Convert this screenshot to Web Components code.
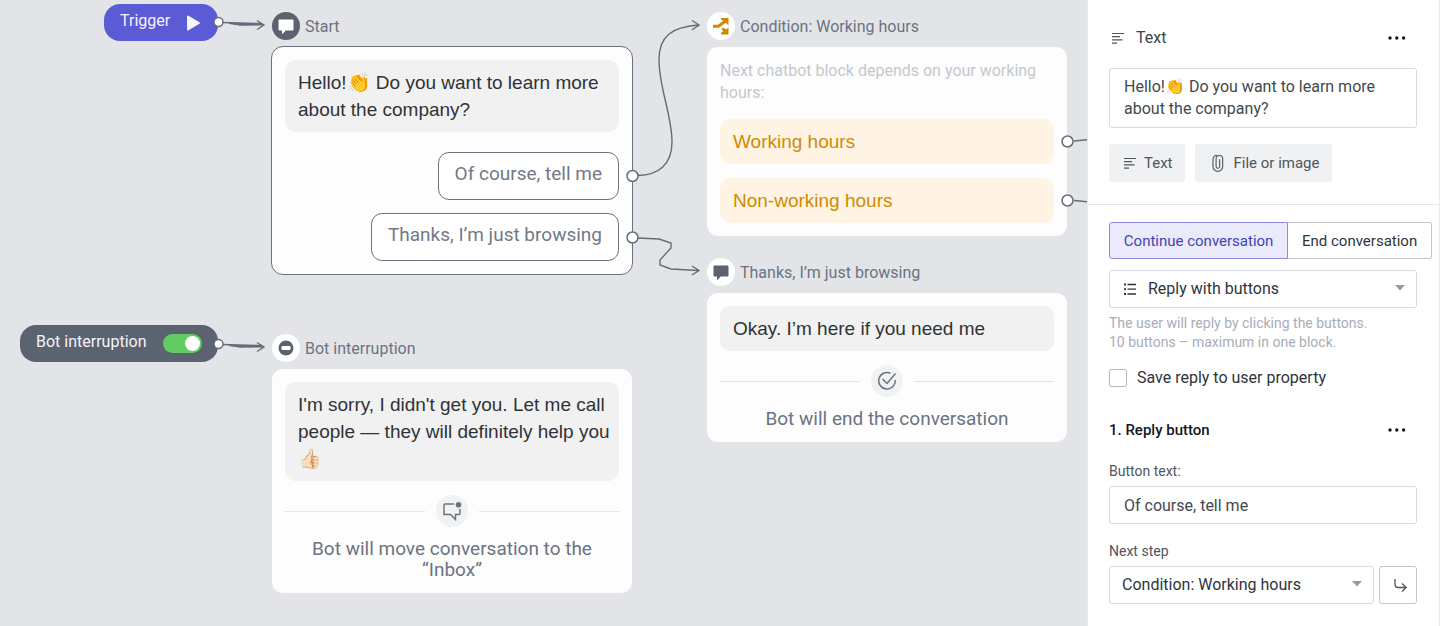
<!DOCTYPE html>
<html lang="en">
<head>
<meta charset="utf-8">
<title>Chatbot builder</title>
<style>
  body { margin: 0; font-family: Roboto, "Liberation Sans", sans-serif; font-size: 16px; color: #2f343c; }
</style>
</head>
<body>
<bot-builder></bot-builder>

<script>
const define = (name, html, setup) => {
  const template = document.createElement('template');
  template.innerHTML = html;
  customElements.define(name, class extends HTMLElement {
    constructor() {
      super();
      this.attachShadow({ mode: 'open' }).append(template.content.cloneNode(true));
    }
    connectedCallback() { if (setup) setup(this, this.shadowRoot); }
  });
};

const ICONS = {
  chat: [18, '<path fill="currentColor" d="M2 3h14v10H8.500L5.500 16.500V13H2z" stroke="currentColor" stroke-linejoin="round"/>'],
  branch: [18, '<path fill="none" stroke="currentColor" stroke-width="3" d="M1 9.300H6.500L13.500 4"/><path fill="currentColor" d="M9 1H16.500V8.500L14.500 6.500L11 3.500L9 2.800zM9 17.500H16.500V10.500L14 12.500L12 10.800L9.500 11.500L11 14.500L9 15.800z"/>'],
  minus: [18, '<circle cx="9" cy="9" r="7.500" fill="currentColor"/><rect x="4.500" y="7" width="9" height="4" rx="1.200" fill="#fff"/>'],
  play: [18, '<path fill="currentColor" d="M3 2.500v13a1 1 0 0 0 1.500.8l11-6.500a1 1 0 0 0 0-1.600l-11-6.500A1 1 0 0 0 3 2.500z"/>'],
  inbox: [20, '<path d="M12 3H3a1 1 0 0 0-1 1v9.500h6.500L13.500 18.500V13.500H17a1 1 0 0 0 1-1V8" fill="none" stroke="currentColor" stroke-width="1.500"/><circle cx="16.500" cy="3.800" r="2.800" fill="currentColor"/>'],
  done: [20, '<path d="M13.500 2.200A8.300 8.300 0 1 0 18.300 9" fill="none" stroke="currentColor" stroke-width="1.500"/><path d="M5.500 8l4.500 4.500L18.500 2.500" fill="none" stroke="currentColor" stroke-width="1.500"/>'],
  lines: [14, '<path d="M1 2.500h12M1 5.700h8M1 8.900h10.500M1 12.100h5" stroke="currentColor" stroke-width="1.200"/>'],
  list: [14, '<path d="M4.500 2.500H13M4.500 7.200H13M4.500 12H13" stroke="currentColor" stroke-width="1.300"/><path d="M1 2.500h2M1 7.200h2M1 12h2" stroke="currentColor" stroke-width="1.800"/>'],
  clip: [18, '<path d="M4 6v6.500a4.700 4.700 0 0 0 9.700 0V4.800a3.300 3.300 0 0 0-6.600 0V12.500a1.800 1.800 0 0 0 3.600 0V5.500M4 6C4 3.500 5 1.800 7.500 1.300" fill="none" stroke="currentColor" stroke-width="1.100" stroke-linecap="round"/>'],
  dots: [20, '<g fill="currentColor"><circle cx="3" cy="10" r="1.700"/><circle cx="9.800" cy="10" r="1.700"/><circle cx="16.600" cy="10" r="1.700"/></g>'],
  caret: [10, '<path d="M0 2h10L5 7.500z" fill="currentColor"/>'],
  jump: [18, '<path d="M4 3v5.500a3 3 0 0 0 3 3h8M11 7.500l4.200 4L11 15.500" fill="none" stroke="currentColor" stroke-width="1.300"/>']
};

define('ui-icon', `
  <style>:host { display: block; flex: none; line-height: 0 } svg { display: block }</style>
  <svg aria-hidden="true"></svg>`, (host, root) => {
  const [size, shape] = ICONS[host.getAttribute('name')];
  const svg = root.querySelector('svg');
  svg.setAttribute('width', size);
  svg.setAttribute('height', size);
  svg.setAttribute('viewBox', `0 0 ${size} ${size}`);
  svg.innerHTML = shape;
});

define('start-pill', `
  <style>
    :host { display: flex; align-items: center; justify-content: space-between; box-sizing: border-box;
      height: 37px; padding: 0 16px; border-radius: 16px; background: #5b5bd6; color: #f4f4fb; }
    .label { padding-bottom: 3px; line-height: 20px; }
  </style>
  <span class="label"><slot></slot></span><slot name="control"></slot>`);

define('toggle-switch', `
  <style>
    :host { display: block; }
    input { appearance: none; display: flex; justify-content: flex-end; align-items: center; box-sizing: border-box;
      width: 39px; height: 19px; margin: 0; padding: 0 2px; border-radius: 10px; background: #62cb62; }
    input::before { content: ""; width: 15px; height: 15px; border-radius: 50%; background: #fff; }
  </style>
  <input type="checkbox" role="switch" aria-label="Bot interruption" checked>`);

define('flow-node', `
  <style>
    :host { display: block; width: 362px; }
    header { display: flex; align-items: center; gap: 5px; padding-left: 1px; height: 28px; margin-bottom: 6px; color: #6c7380; }
    .badge { display: grid; place-items: center; width: 28px; height: 28px; border-radius: 50%; background: #fff; color: #5b6270; }
    :host([tone="dark"]) .badge { background: #5b6270; color: #fff; }
    :host([tone="amber"]) .badge { color: #cf8a05; }
    h2 { margin: 0; font-size: 16px; line-height: 20px; font-weight: 400; padding-top: 2px; }
    section { display: flex; flex-direction: column; box-sizing: border-box; padding: 13px; border: 1px solid transparent;
      border-radius: 12px; background: #fdfdfd padding-box; }
    :host([selected]) section { border-color: #6b7280; }
  </style>
  <header><span class="badge"><slot name="icon"></slot></span><h2><slot name="title"></slot></h2></header>
  <section><slot></slot></section>`);

define('flow-message', `
  <style>
    :host { display: block; padding: 9px 8px 9px 13px; border-radius: 10px; background: #f1f1f1; color: #2f3338;
      font: 19px/27px "Liberation Sans", Arial, sans-serif; }
  </style><slot></slot>`);

define('flow-reply', `
  <style>
    :host { display: block; align-self: flex-end; margin-top: 13px; }
    :host([first]) { margin-top: 20px; }
    button { box-sizing: border-box; height: 48px; padding: 0 16px 5px; border: 1px solid #6b7280; border-radius: 11px;
      background: #fff; color: #727988; font: inherit; font-size: 19px; line-height: 24px; }
  </style><button type="button"><slot></slot></button>`);

define('flow-branch', `
  <style>
    :host { display: block; margin-top: 14px; padding: 9px 13px; border-radius: 11px; background: #fff4e3; color: #cf8a05;
      font: 19px/27px "Liberation Sans", Arial, sans-serif; }
  </style><slot></slot>`);

define('flow-note', `
  <style>:host { display: block; padding-bottom: 1px; color: #c4c7cf; font-size: 16px; line-height: 22px; }</style><slot></slot>`);

define('flow-outcome', `
  <style>
    :host { display: block; margin-top: 14px; color: #6c7380; text-align: center; font-size: 19px; line-height: 21px; }
    .rule { display: flex; align-items: center; gap: 11px; margin-bottom: 11px; }
    .rule::before, .rule::after { content: ""; flex: 1; height: 1px; background: #e2e5ea; }
    .badge { display: grid; place-items: center; width: 32px; height: 32px; border-radius: 50%; background: #f1f2f4; }
    p { margin: 0 20px; }
  </style>
  <div class="rule"><span class="badge"><slot name="icon"></slot></span></div><p><slot></slot></p>`);

define('flow-canvas', `
  <style>
    :host { display: block; position: relative; overflow: hidden; background: #e3e4e8; }
    flow-node, start-pill { position: absolute; }
    #trigger { left: 104px; top: 4px; width: 114px; }
    #interruption { left: 20px; top: 325px; width: 198px; background: #5b6270; }
    #start { left: 271px; top: 12px; }
    #condition { left: 706px; top: 12px; }
    #thanks { left: 706px; top: 258px; }
    #fallback { left: 271px; top: 334px; }
    .wires { position: absolute; inset: 0; width: 100%; height: 100%; pointer-events: none; }
    .wires path { fill: none; stroke: #656c79; stroke-width: 1.400; }
    .wires circle { fill: #fff; stroke: #656c79; stroke-width: 1.500; }
    .wires .thick { fill: #656c79; stroke-width: 1; }
  </style>
  <start-pill id="trigger">Trigger<ui-icon slot="control" name="play"></ui-icon></start-pill>
  <start-pill id="interruption">Bot interruption<toggle-switch slot="control"></toggle-switch></start-pill>

  <flow-node id="start" tone="dark" selected>
    <ui-icon slot="icon" name="chat"></ui-icon><span slot="title">Start</span>
    <flow-message>Hello!👏 Do you want to learn more about the company?</flow-message>
    <flow-reply first>Of course, tell me</flow-reply>
    <flow-reply>Thanks, I’m just browsing</flow-reply>
  </flow-node>

  <flow-node id="condition" tone="amber">
    <ui-icon slot="icon" name="branch"></ui-icon><span slot="title">Condition: Working hours</span>
    <flow-note>Next chatbot block depends on your working hours:</flow-note>
    <flow-branch>Working hours</flow-branch>
    <flow-branch>Non-working hours</flow-branch>
  </flow-node>

  <flow-node id="thanks">
    <ui-icon slot="icon" name="chat"></ui-icon><span slot="title">Thanks, I’m just browsing</span>
    <flow-message>Okay. I’m here if you need me</flow-message>
    <flow-outcome><ui-icon slot="icon" name="done"></ui-icon>Bot will end the conversation</flow-outcome>
  </flow-node>

  <flow-node id="fallback">
    <ui-icon slot="icon" name="minus"></ui-icon><span slot="title">Bot interruption</span>
    <flow-message>I'm sorry, I didn't get you. Let me call people — they will definitely help you 👍🏻</flow-message>
    <flow-outcome><ui-icon slot="icon" name="inbox"></ui-icon>Bot will move conversation to the “Inbox”</flow-outcome>
  </flow-node>

  <svg class="wires" aria-hidden="true">
    <path d="M222 22.500L260 23.500L264 25M257 20.500L264 25L257 29.500"/>
    <path class="thick" d="M229 23.500L256 23.500L262 25L240 25.200z"/>
    <path d="M222 344.500L260 345.500L264 347M257 342.500L264 347L257 351.500"/>
    <path class="thick" d="M229 345.500L256 345.500L262 347L240 347.200z"/>
    <path d="M638 175.500C658 175 672 165 672 142C672 115 659 88 659 60C659 36 672 27 698 25M692 20.500L699 25L692 30"/>
    <path d="M638 238L659 239L671 243V248L660 260V265L671 269L698 270.500M692 266L699 270.500L692 275"/>
    <path d="M1074 141L1090 139.500M1074 200.500L1090 202"/>
    <circle cx="218.500" cy="22" r="4.500"/><circle cx="218.500" cy="344" r="4.500"/>
    <circle cx="632.500" cy="176" r="5.500"/><circle cx="632.500" cy="237.500" r="5.500"/>
    <circle cx="1067.500" cy="141.500" r="5.500"/><circle cx="1067.500" cy="200.500" r="5.500"/>
  </svg>`);

define('ui-select', `
  <style>
    :host { display: block; color: #2f343c; }
    label { display: block; margin-bottom: 6px; font-size: 14px; line-height: 18px; color: #50555e; }
    .row { display: flex; gap: 5px; }
    .box { position: relative; flex: 1; }
    select { appearance: none; display: block; box-sizing: border-box; width: 100%; height: 38px; padding: 0 34px 1px 12px;
      border: 1px solid #d9dbdf; border-radius: 3px; background: #fff; color: inherit; font: inherit; font-size: 16px; }
    :host([icon]) select { padding-left: 38px; }
    :host([icon]) label { position: absolute; width: 1px; height: 1px; margin: 0; overflow: hidden; clip-path: inset(50%); }
    .lead, .caret { position: absolute; top: 0; height: 38px; display: flex; align-items: center; pointer-events: none; }
    .lead { left: 14px; }
    .caret { right: 12px; padding-bottom: 2px; box-sizing: border-box; color: #9a9a9a; }
    ::slotted(button) { display: grid; place-items: center; width: 38px; height: 38px; padding: 0 0 0 4px; border: 1px solid #c3c6ce;
      border-radius: 3px; background: #fff; color: #50555e; }
  </style>
  <label for="choice"></label>
  <div class="row">
    <div class="box"><select id="choice"></select><span class="lead"></span><span class="caret"><ui-icon name="caret"></ui-icon></span></div>
    <slot></slot>
  </div>`, (host, root) => {
  const select = root.querySelector('select');
  if (host.hasAttribute('icon')) {
    root.querySelector('label').remove();
    select.setAttribute('aria-label', host.getAttribute('label'));
    root.querySelector('.lead').innerHTML = `<ui-icon name="${host.getAttribute('icon')}"></ui-icon>`;
  } else root.querySelector('label').textContent = host.getAttribute('label');
  select.append(new Option(host.getAttribute('value')));
});

define('ui-field', `
  <style>
    :host { display: block; margin-bottom: 18px; }
    label { display: block; margin-bottom: 6px; font-size: 14px; line-height: 18px; color: #50555e; }
    input { display: block; box-sizing: border-box; width: 100%; height: 38px; padding: 0 14px; border: 1px solid #d9dbdf;
      border-radius: 3px; color: #43484f; font: inherit; font-size: 16px; }
  </style>
  <label for="field"></label><input id="field" type="text">`, (host, root) => {
  root.querySelector('label').textContent = host.getAttribute('label');
  root.querySelector('input').value = host.getAttribute('value');
});

define('panel-heading', `
  <style>
    :host { display: flex; align-items: center; justify-content: space-between; height: 28px; }
    h3 { display: flex; align-items: center; gap: 11px; margin: 0; font-size: 16px; line-height: 20px; font-weight: 400; color: #3e434b; }
    :host([strong]) h3 { font-size: 15px; font-weight: 500; color: #14171c; }
    button { padding: 0; margin-right: 10px; border: 0; background: none; color: #16181d; }
  </style>
  <h3><slot></slot></h3><button type="button" aria-label="More"><ui-icon name="dots"></ui-icon></button>`);

define('soft-button', `
  <style>
    :host { display: block; }
    button { display: flex; align-items: center; gap: 7px; height: 38px; padding: 0 12px 0 14px; border: 0; border-radius: 3px;
      background: #f0f1f3; color: #50555e; font: inherit; font-size: 15px; }
  </style><button type="button"><slot></slot></button>`);

define('side-panel', `
  <style>
    :host { display: block; box-sizing: border-box; background: #fff; border: solid #e9eaee; border-width: 0 1px; }
    .block { padding: 24px 22px 22px 21px; border-bottom: 1px solid #e4e6ea; }
    .reply { padding-top: 17px; border-bottom: 0; }
    textarea { display: block; box-sizing: border-box; width: 100%; height: 60px; margin: 16px 0; padding: 7px 14px;
      border: 1px solid #d9dbdf; border-radius: 3px; resize: none; overflow: hidden; color: #43484f; font: inherit; line-height: 22px; }
    .adders { display: flex; gap: 10px; }
    .lead { padding-left: 2px; color: #50555e; }
    .tabs { display: flex; margin: 0 -15px 11px 0; }
    .tabs button { flex: auto; height: 37px; padding: 0; border: 1px solid #c3c6ce; border-left: 0; border-radius: 0 3px 3px 0;
      background: #fff; color: #2f343c; font: inherit; font-size: 15px; white-space: nowrap; }
    .tabs .on { border: 1px solid #8c8ce2; border-radius: 3px 0 0 3px; background: #eaeafa; color: #4444b5; }
    .hint { margin: 6px 0 16px; color: #a9adb8; font-size: 14px; line-height: 19px; }
    .check { display: flex; align-items: center; gap: 10px; line-height: 20px; margin-bottom: 28px; }
    .check input { appearance: none; width: 18px; height: 18px; margin: 0; border: 1px solid #b4b8c2; border-radius: 2px; background: #fff; }
    .title { margin-bottom: 18px; }
  </style>
  <div class="block">
    <panel-heading><ui-icon class="lead" name="lines"></ui-icon>Text</panel-heading>
    <textarea aria-label="Message text">Hello!👏 Do you want to learn more about the company?</textarea>
    <div class="adders">
      <soft-button><ui-icon name="lines"></ui-icon>Text</soft-button>
      <soft-button><ui-icon name="clip"></ui-icon>File or image</soft-button>
    </div>
  </div>
  <div class="block reply">
    <div class="tabs"><button type="button" class="on">Continue conversation</button><button type="button">End conversation</button></div>
    <ui-select icon="list" label="Reply type" value="Reply with buttons"></ui-select>
    <p class="hint">The user will reply by clicking the buttons.<br>10 buttons – maximum in one block.</p>
    <label class="check"><input type="checkbox">Save reply to user property</label>
    <panel-heading class="title" strong>1. Reply button</panel-heading>
    <ui-field label="Button text:" value="Of course, tell me"></ui-field>
    <ui-select label="Next step" value="Condition: Working hours">
      <button type="button" aria-label="Go to step"><ui-icon name="jump"></ui-icon></button>
    </ui-select>
  </div>`);

define('bot-builder', `
  <style>
    :host { display: flex; min-height: 100vh; }
    flow-canvas { flex: 1; min-width: 0; }
    side-panel { flex: 0 0 353px; }
  </style>
  <flow-canvas></flow-canvas><side-panel></side-panel>`);
</script>
</body>
</html>
